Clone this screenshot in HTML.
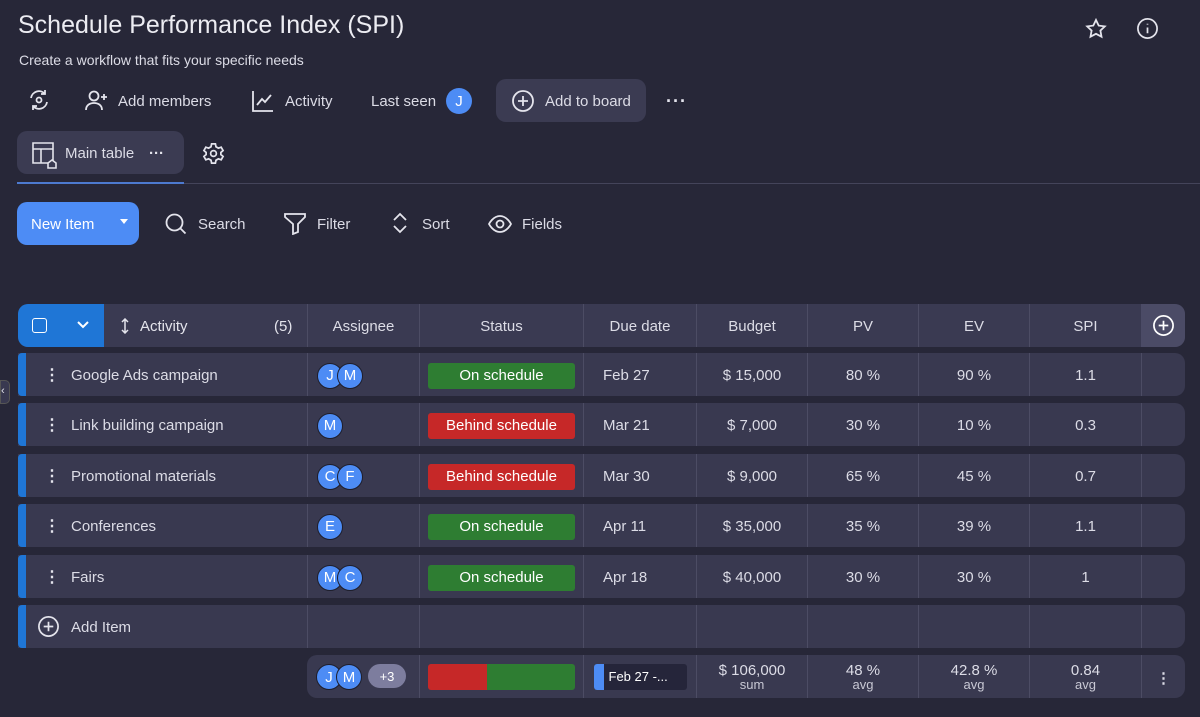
<!DOCTYPE html><html><head><meta charset="utf-8"><style>
*{box-sizing:border-box;margin:0;padding:0}
body{width:1200px;height:717px;background:#272738;font-family:"Liberation Sans",sans-serif;color:#e4e4ec;position:relative;overflow:hidden}
.a{position:absolute}
.t{font-size:15px;color:#dcdce6}
.row{position:absolute;left:18px;width:1167px;height:43px;background:#393950;border-radius:0 10px 10px 0}
.row .bar{position:absolute;left:0;top:0;width:8px;height:43px;background:#1f76d6;border-radius:4px 0 0 4px}
.row .t{top:14px}
.c{position:absolute;top:0;height:43px;display:flex;align-items:center;justify-content:center;font-size:15px;color:#dcdce6;border-left:1px solid #4c4c64;padding-top:2px}
.av{width:26px;height:26px;border-radius:50%;background:#4d8cf5;color:#fff;font-size:15px;display:inline-flex;align-items:center;justify-content:center;border:1px solid #1e1e2c}
.st{width:147px;height:26px;border-radius:3px;color:#fff;font-size:15px;display:flex;align-items:center;justify-content:center}
.g{background:#2e7d32}.r{background:#c62828}
svg{position:absolute}
</style></head><body>
<div class="a" style="left:18px;top:11px;font-size:25px;color:#ececf2">Schedule Performance Index (SPI)</div>
<div class="a" style="left:19px;top:52px;font-size:14px;color:#dcdce6">Create a workflow that fits your specific needs</div>
<svg style="left:1084px;top:17px" width="24" height="24" viewBox="0 0 24 24" fill="none" stroke="#e4e4ec" stroke-width="1.8"><path d="M12 3l2.7 5.6 6.1.8-4.4 4.2 1.1 6.1L12 16.8 6.5 19.7l1.1-6.1L3.2 9.4l6.1-.8z"/></svg>
<svg style="left:1136px;top:17px" width="23" height="23" viewBox="0 0 24 24" fill="none" stroke="#e4e4ec" stroke-width="1.8"><circle cx="12" cy="12" r="10"/><path d="M12 11v6M12 7v1"/></svg>
<svg style="left:27px;top:88px" width="24" height="24" viewBox="0 0 24 24" fill="none" stroke="#e4e4ec" stroke-width="1.8"><path d="M4 10a8 8 0 0 1 14-4M20 14a8 8 0 0 1-14 4M18 2v4h-4M6 22v-4h4"/><circle cx="12" cy="12" r="2.5"/></svg>
<svg style="left:85px;top:89px" width="24" height="22" viewBox="0 0 24 22" fill="none" stroke="#e4e4ec" stroke-width="1.8"><circle cx="9" cy="7" r="4.5"/><path d="M1 21c0-5 4-7 8-7s8 2 8 7M19 5v6M16 8h6"/></svg>
<div class="a t" style="left:118px;top:93px">Add members</div>
<svg style="left:251px;top:89px" width="24" height="24" viewBox="0 0 24 24" fill="none" stroke="#e4e4ec" stroke-width="1.8"><path d="M2 2v20h20M6 16l5-6 3 3 6-7"/></svg>
<div class="a t" style="left:285px;top:93px">Activity</div>
<div class="a t" style="left:371px;top:93px">Last seen</div>
<div class="a av" style="left:446px;top:88px;width:26px;height:26px;border:none">J</div>
<div class="a" style="left:496px;top:79px;width:150px;height:43px;border-radius:10px;background:#3b3b52"></div>
<svg style="left:511px;top:89px" width="24" height="24" viewBox="0 0 24 24" fill="none" stroke="#e4e4ec" stroke-width="1.8"><circle cx="12" cy="12" r="10"/><path d="M12 7v10M7 12h10"/></svg>
<div class="a t" style="left:545px;top:93px">Add to board</div>
<div class="a" style="left:666px;top:91px;font-size:18px;font-weight:bold;letter-spacing:1px">···</div>
<div class="a" style="left:17px;top:131px;width:167px;height:43px;border-radius:10px;background:#3b3b52"></div>
<svg style="left:32px;top:142px" width="28" height="28" viewBox="0 0 28 28" fill="none" stroke="#e4e4ec" stroke-width="1.6"><path d="M1 1h20v20H1zM1 7h20M9 7v14"/><path d="M16 26v-5l4-3 4 3v5z" fill="#3b3b52"/></svg>
<div class="a t" style="left:65px;top:145px">Main table</div>
<div class="a" style="left:149px;top:145px;font-size:15px;font-weight:bold">···</div>
<svg style="left:202px;top:142px" width="23" height="23" viewBox="0 0 24 24" fill="none" stroke="#e4e4ec" stroke-width="1.8"><circle cx="12" cy="12" r="3"/><path d="M10 2h4l.6 3 2.5 1.4 2.9-1 2 3.5-2.3 2v2.2l2.3 2-2 3.5-2.9-1-2.5 1.4-.6 3h-4l-.6-3-2.5-1.4-2.9 1-2-3.5 2.3-2v-2.2l-2.3-2 2-3.5 2.9 1L9.4 5z"/></svg>
<div class="a" style="left:17px;top:183px;width:1183px;height:1px;background:#44445a"></div>
<div class="a" style="left:17px;top:182px;width:167px;height:2px;background:#4d7ad0"></div>
<div class="a" style="left:17px;top:202px;width:122px;height:43px;border-radius:10px;background:#4d8cf5"></div>
<div class="a" style="left:31px;top:216px;font-size:15px;color:#fff">New Item</div>
<div class="a" style="left:120px;top:219px;width:0;height:0;border:4px solid transparent;border-top:5px solid #fff"></div>
<svg style="left:164px;top:212px" width="24" height="24" viewBox="0 0 24 24" fill="none" stroke="#e4e4ec" stroke-width="1.8"><circle cx="10.5" cy="10.5" r="8"/><path d="M16.5 16.5l5 5"/></svg>
<div class="a t" style="left:198px;top:216px">Search</div>
<svg style="left:283px;top:211px" width="24" height="24" viewBox="0 0 24 24" fill="none" stroke="#e4e4ec" stroke-width="1.8"><path d="M2 3h20v3l-7 7v8l-5 2v-10L2 6z"/></svg>
<div class="a t" style="left:317px;top:216px">Filter</div>
<svg style="left:390px;top:211px" width="20" height="24" viewBox="0 0 20 24" fill="none" stroke="#e4e4ec" stroke-width="1.8"><path d="M4 9l6-6 6 6M4 15l6 6 6-6"/></svg>
<div class="a t" style="left:422px;top:216px">Sort</div>
<svg style="left:488px;top:212px" width="24" height="24" viewBox="0 0 24 24" fill="none" stroke="#e4e4ec" stroke-width="1.8"><path d="M1 12s4-8 11-8 11 8 11 8-4 8-11 8S1 12 1 12z"/><circle cx="12" cy="12" r="3.5"/></svg>
<div class="a t" style="left:522px;top:216px">Fields</div>

<div class="a" style="left:18px;top:304px;width:1167px;height:43px;background:#3a3a52;border-radius:10px;overflow:hidden">
<div style="position:absolute;left:0;top:0;width:86px;height:43px;background:#1f76d6"></div>
<div style="position:absolute;left:14px;top:14px;width:15px;height:15px;border:1.5px solid #fff;border-radius:3px"></div>
<svg style="left:58px;top:15px" width="14" height="12" viewBox="0 0 14 12" fill="none" stroke="#fff" stroke-width="2"><path d="M2 3l5 5 5-5"/></svg>
<svg style="left:103px;top:14px" width="8" height="16" viewBox="0 0 8 16" fill="none" stroke="#e4e4ec" stroke-width="1.5"><path d="M4 1v14M1 4l3-3 3 3M1 12l3 3 3-3"/></svg>
<div style="position:absolute;left:122px;top:14px;font-size:15px">Activity</div>
<div style="position:absolute;left:256px;top:14px;font-size:15px">(5)</div>
<div class="c" style="left:289px;width:112px">Assignee</div>
<div class="c" style="left:401px;width:164px">Status</div>
<div class="c" style="left:565px;width:113px">Due date</div>
<div class="c" style="left:678px;width:111px">Budget</div>
<div class="c" style="left:789px;width:111px">PV</div>
<div class="c" style="left:900px;width:111px">EV</div>
<div class="c" style="left:1011px;width:112px">SPI</div>
<div style="position:absolute;left:1123px;top:0;width:44px;height:43px;background:#4b4b66"></div>
<svg style="left:1134px;top:10px" width="23" height="23" viewBox="0 0 24 24" fill="none" stroke="#fff" stroke-width="1.8"><circle cx="12" cy="12" r="10"/><path d="M12 7v10M7 12h10"/></svg>
</div>

<div class="row" style="top:353px"><div class="bar"></div><div class="a" style="left:26px;top:12px;font-size:16px;font-weight:bold">⋮</div><div class="a t" style="left:53px">Google Ads campaign</div>
<div class="c" style="left:289px;width:112px;justify-content:flex-start;padding-left:9px"><span class="av">J</span><span class="av" style="margin-left:-6px">M</span></div>
<div class="c" style="left:401px;width:164px"><div class="st g">On schedule</div></div>
<div class="c" style="left:565px;width:113px;justify-content:flex-start;padding-left:19px">Feb 27</div>
<div class="c" style="left:678px;width:111px">$ 15,000</div><div class="c" style="left:789px;width:111px">80 %</div><div class="c" style="left:900px;width:111px">90 %</div><div class="c" style="left:1011px;width:112px">1.1</div><div class="c" style="left:1123px;width:44px"></div></div>

<div class="row" style="top:403px"><div class="bar"></div><div class="a" style="left:26px;top:12px;font-size:16px;font-weight:bold">⋮</div><div class="a t" style="left:53px">Link building campaign</div>
<div class="c" style="left:289px;width:112px;justify-content:flex-start;padding-left:9px"><span class="av">M</span></div>
<div class="c" style="left:401px;width:164px"><div class="st r">Behind schedule</div></div>
<div class="c" style="left:565px;width:113px;justify-content:flex-start;padding-left:19px">Mar 21</div>
<div class="c" style="left:678px;width:111px">$ 7,000</div><div class="c" style="left:789px;width:111px">30 %</div><div class="c" style="left:900px;width:111px">10 %</div><div class="c" style="left:1011px;width:112px">0.3</div><div class="c" style="left:1123px;width:44px"></div></div>

<div class="row" style="top:454px"><div class="bar"></div><div class="a" style="left:26px;top:12px;font-size:16px;font-weight:bold">⋮</div><div class="a t" style="left:53px">Promotional materials</div>
<div class="c" style="left:289px;width:112px;justify-content:flex-start;padding-left:9px"><span class="av">C</span><span class="av" style="margin-left:-6px">F</span></div>
<div class="c" style="left:401px;width:164px"><div class="st r">Behind schedule</div></div>
<div class="c" style="left:565px;width:113px;justify-content:flex-start;padding-left:19px">Mar 30</div>
<div class="c" style="left:678px;width:111px">$ 9,000</div><div class="c" style="left:789px;width:111px">65 %</div><div class="c" style="left:900px;width:111px">45 %</div><div class="c" style="left:1011px;width:112px">0.7</div><div class="c" style="left:1123px;width:44px"></div></div>

<div class="row" style="top:504px"><div class="bar"></div><div class="a" style="left:26px;top:12px;font-size:16px;font-weight:bold">⋮</div><div class="a t" style="left:53px">Conferences</div>
<div class="c" style="left:289px;width:112px;justify-content:flex-start;padding-left:9px"><span class="av">E</span></div>
<div class="c" style="left:401px;width:164px"><div class="st g">On schedule</div></div>
<div class="c" style="left:565px;width:113px;justify-content:flex-start;padding-left:19px">Apr 11</div>
<div class="c" style="left:678px;width:111px">$ 35,000</div><div class="c" style="left:789px;width:111px">35 %</div><div class="c" style="left:900px;width:111px">39 %</div><div class="c" style="left:1011px;width:112px">1.1</div><div class="c" style="left:1123px;width:44px"></div></div>

<div class="row" style="top:555px"><div class="bar"></div><div class="a" style="left:26px;top:12px;font-size:16px;font-weight:bold">⋮</div><div class="a t" style="left:53px">Fairs</div>
<div class="c" style="left:289px;width:112px;justify-content:flex-start;padding-left:9px"><span class="av">M</span><span class="av" style="margin-left:-6px">C</span></div>
<div class="c" style="left:401px;width:164px"><div class="st g">On schedule</div></div>
<div class="c" style="left:565px;width:113px;justify-content:flex-start;padding-left:19px">Apr 18</div>
<div class="c" style="left:678px;width:111px">$ 40,000</div><div class="c" style="left:789px;width:111px">30 %</div><div class="c" style="left:900px;width:111px">30 %</div><div class="c" style="left:1011px;width:112px">1</div><div class="c" style="left:1123px;width:44px"></div></div>

<div class="row" style="top:605px"><div class="bar"></div>
<svg style="left:19px;top:10px" width="23" height="23" viewBox="0 0 24 24" fill="none" stroke="#e4e4ec" stroke-width="1.8"><circle cx="12" cy="12" r="10"/><path d="M12 7v10M7 12h10"/></svg>
<div class="a t" style="left:53px">Add Item</div>
<div class="c" style="left:289px;width:112px"></div><div class="c" style="left:401px;width:164px"></div><div class="c" style="left:565px;width:113px"></div><div class="c" style="left:678px;width:111px"></div><div class="c" style="left:789px;width:111px"></div><div class="c" style="left:900px;width:111px"></div><div class="c" style="left:1011px;width:112px"></div><div class="c" style="left:1123px;width:44px"></div></div>

<div class="a" style="left:0;top:380px;width:10px;height:24px;background:#393950;border:1px solid #555;border-radius:0 5px 5px 0;font-size:11px;line-height:20px">‹</div>

<div class="a" style="left:307px;top:655px;width:878px;height:43px;background:#393950;border-radius:10px">
<div style="position:absolute;left:9px;top:9px;display:flex"><span class="av">J</span><span class="av" style="margin-left:-6px">M</span><span style="margin-left:6px;width:38px;height:24px;border-radius:12px;background:#7d7d9e;color:#fff;font-size:13px;display:flex;align-items:center;justify-content:center">+3</span></div>
<div class="c" style="left:112px;width:164px;padding-top:0"><div style="width:147px;height:26px;display:flex;border-radius:3px;overflow:hidden"><div style="width:59px;background:#c62828"></div><div style="flex:1;background:#2e7d32"></div></div></div>
<div class="c" style="left:276px;width:113px;padding-top:0"><div style="width:93px;height:26px;background:#25253a;border-radius:3px;display:flex;align-items:center;font-size:13px;color:#fff"><div style="width:10px;height:26px;background:#4d8cf5;border-radius:3px 0 0 3px;margin-right:5px"></div>Feb 27 -...</div></div>
<div class="c" style="left:389px;width:111px;flex-direction:column;line-height:14px">$ 106,000<span style="font-size:13px;color:#c8c8d4">sum</span></div>
<div class="c" style="left:500px;width:111px;flex-direction:column;line-height:14px">48 %<span style="font-size:13px;color:#c8c8d4">avg</span></div>
<div class="c" style="left:611px;width:111px;flex-direction:column;line-height:14px">42.8 %<span style="font-size:13px;color:#c8c8d4">avg</span></div>
<div class="c" style="left:722px;width:112px;flex-direction:column;line-height:14px">0.84<span style="font-size:13px;color:#c8c8d4">avg</span></div>
<div class="c" style="left:834px;width:44px;font-weight:bold">⋮</div>
</div>
</body></html>
